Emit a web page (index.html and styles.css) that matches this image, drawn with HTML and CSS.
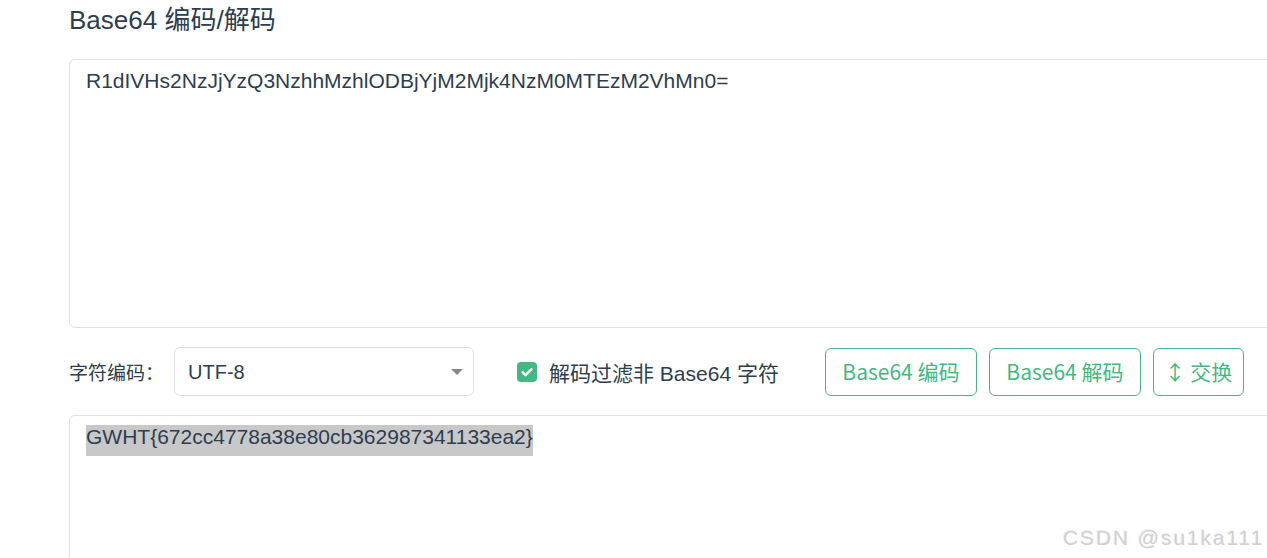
FILE: index.html
```html
<!DOCTYPE html>
<html lang="zh-CN">
<head>
<meta charset="utf-8">
<title>Base64 编码/解码</title>
<link rel="stylesheet" href="styles.css">
</head>
<body>
<div class="page">
  <h2 class="title">Base64 编码/解码</h2>
  <div class="box box-top">R1dIVHs2NzJjYzQ3NzhhMzhlODBjYjM2Mjk4NzM0MTEzM2VhMn0=</div>
  <div class="toolbar">
    <span class="label">字符编码：</span>
    <div class="select">
      <span class="select-value">UTF-8</span>
      <span class="select-arrow"></span>
    </div>
    <label class="check">
      <span class="check-box">
        <svg viewBox="0 0 20 20" width="20" height="20"><path d="M5.5 10.2 L8.6 13.2 L14.5 7.2" fill="none" stroke="#fff" stroke-width="2.4" stroke-linecap="round" stroke-linejoin="round"/></svg>
      </span>
      <span class="check-text">解码过滤非 Base64 字符</span>
    </label>
    <div class="buttons">
      <button class="btn btn-wide">Base64 编码</button>
      <button class="btn btn-wide">Base64 解码</button>
      <button class="btn btn-swap">↕ 交换</button>
    </div>
  </div>
  <div class="box box-bottom"><span class="sel">GWHT{672cc4778a38e80cb362987341133ea2}</span></div>
</div>
<div class="watermark">CSDN @su1ka111</div>
</body>
</html>
```
FILE: styles.css
```css
html, body {
  margin: 0;
  padding: 0;
  background: #fff;
  overflow: hidden;
  height: 558px;
}
body {
  font-family: "Liberation Sans", "Noto Sans CJK SC", sans-serif;
  color: #2c3e50;
}
.page {
  padding-left: 69px;
}
.title {
  margin: 0;
  font-size: 26px;
  font-weight: normal;
  line-height: 40px;
  height: 40px;
}
.box {
  margin-top: 19px;
  width: 1220px;
  box-sizing: border-box;
  border: 1px solid #e2e2e2;
  border-radius: 6px;
  padding: 7px 16px;
  font-size: 21px;
  line-height: 28px;
  color: #2c3e50;
  white-space: pre;
}
.box-top {
  height: 269px;
}
.box-bottom {
  margin-top: 19px;
  height: 200px;
}
.sel {
  background: #c8c8c8;
  padding: 0 0 8px;
}
.toolbar {
  margin-top: 19px;
  display: flex;
  align-items: center;
  height: 49px;
}
.label {
  font-size: 19px;
  width: 105px;
}
.select {
  width: 300px;
  height: 49px;
  box-sizing: border-box;
  border: 1px solid #dcdfe6;
  border-radius: 6px;
  display: flex;
  align-items: center;
  justify-content: space-between;
  padding: 0 10px 0 13px;
}
.select-value {
  font-size: 20px;
  padding-top: 2px;
}
.select-arrow {
  width: 0;
  height: 0;
  border-left: 6px solid transparent;
  border-right: 6px solid transparent;
  border-top: 6px solid #888;
}
.check {
  margin-left: 43px;
  display: flex;
  align-items: center;
}
.check-box {
  width: 20px;
  height: 20px;
  border-radius: 4px;
  background: #42b983;
  display: flex;
}
.check-text {
  margin-left: 12px;
  font-size: 21px;
}
.buttons {
  margin-left: 46px;
  display: flex;
  gap: 12px;
}
.btn {
  height: 48px;
  box-sizing: border-box;
  border: 1px solid #42b983;
  border-radius: 6px;
  background: #fff;
  color: #42b983;
  font-family: "Noto Sans CJK SC", sans-serif;
  font-size: 21px;
  padding: 0;
  line-height: 1;
  text-align: center;
}
.btn-wide {
  width: 152px;
}
.btn-swap {
  width: 91px;
}
.watermark {
  position: absolute;
  left: 1063px;
  top: 526px;
  font-family: "Liberation Sans", sans-serif;
  font-size: 21px;
  color: #d0d0d0;
  text-shadow: 1px 1px 0 #fff, -1px -1px 0 #eee;
  letter-spacing: 1.9px;
}
```
